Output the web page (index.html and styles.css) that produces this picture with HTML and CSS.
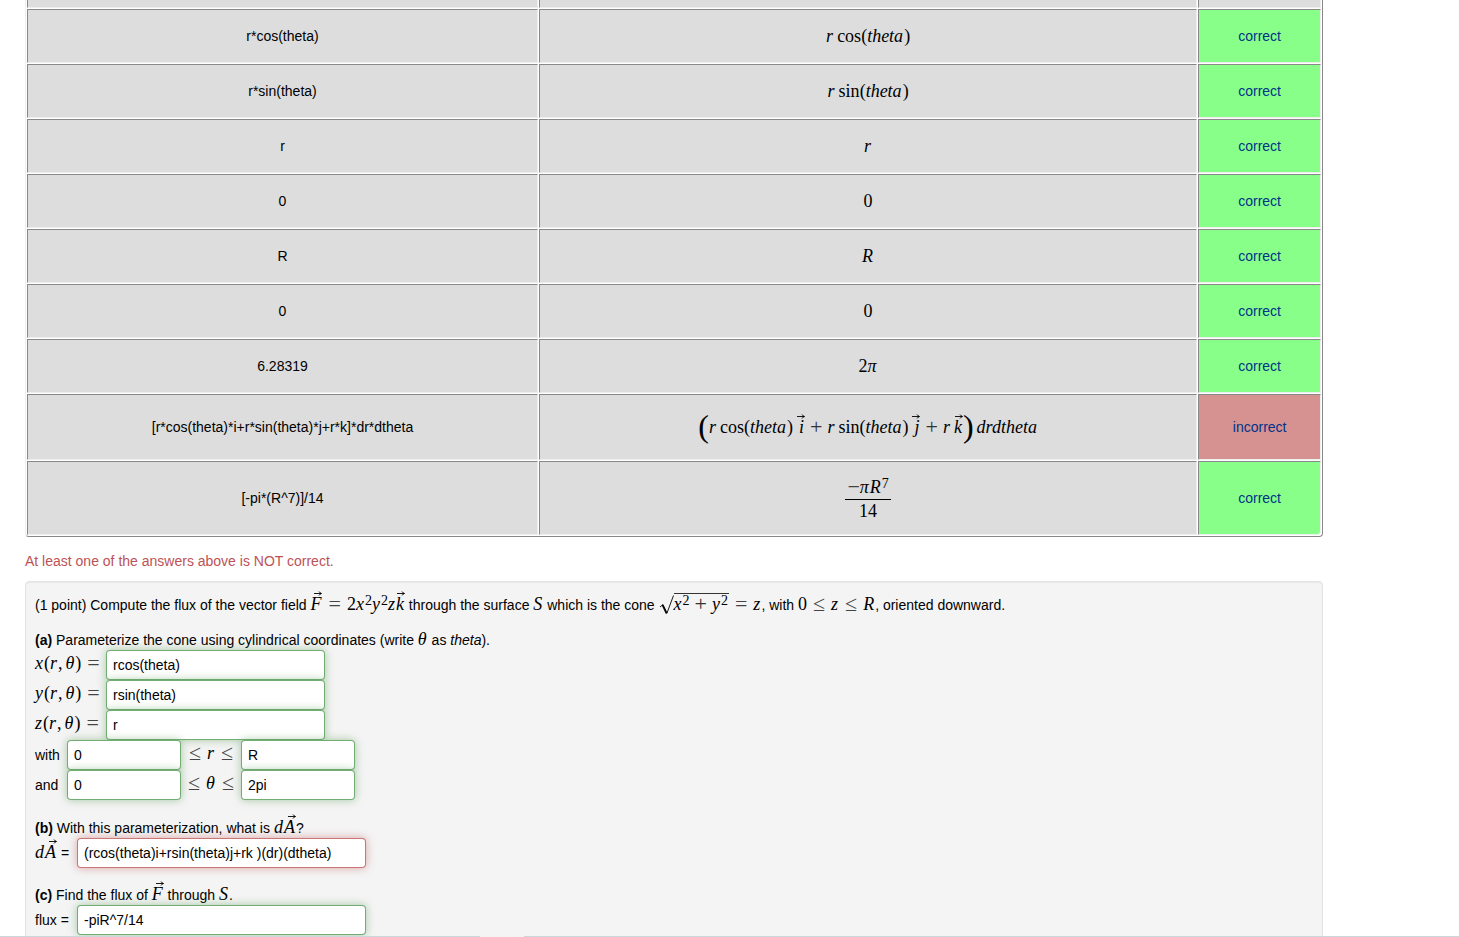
FILE: index.html
```
<!DOCTYPE html>
<html lang="en">
<head>
    <meta charset="UTF-8">
    <meta name="viewport" content="width=device-width, initial-scale=1.0">
    <title>Flux through a cone</title>
    <link rel="stylesheet" href="styles.css">
</head>
<body>
    <!-- vector arrow and radical sign, reused in the formulas -->
    <svg class="defs" width="0" height="0" aria-hidden="true">
        <symbol id="arrow" viewBox="0 0 8 5">
            <path d="M0 2.5H7M5 0.5Q5.6 2 7.6 2.5Q5.6 3 5 4.5" fill="none" stroke="currentColor" stroke-width="0.9"/>
        </symbol>
        <symbol id="radical" viewBox="0 0 15 20">
            <path d="M1 12L4 9.5L8 18L14.5 0.5" fill="none" stroke="currentColor" stroke-width="0.9"/>
            <path d="M3.4 10L7.6 18.6" fill="none" stroke="currentColor" stroke-width="1.6"/>
        </symbol>
    </svg>

    <main class="page">
        <table class="results">
            <colgroup>
                <col class="col-entered">
                <col class="col-preview">
                <col class="col-result">
            </colgroup>
            <tbody>
                <tr><td></td><td></td><td></td></tr>
                <tr>
                    <td>r*cos(theta)</td>
                    <td><span class="math"><i>r</i><span class="fn">cos</span>(<i>theta</i>)</span></td>
                    <td class="correct"><a href="#x">correct</a></td>
                </tr>
                <tr>
                    <td>r*sin(theta)</td>
                    <td><span class="math"><i>r</i><span class="fn">sin</span>(<i>theta</i>)</span></td>
                    <td class="correct"><a href="#y">correct</a></td>
                </tr>
                <tr>
                    <td>r</td>
                    <td><span class="math"><i>r</i></span></td>
                    <td class="correct"><a href="#z">correct</a></td>
                </tr>
                <tr>
                    <td>0</td>
                    <td><span class="math">0</span></td>
                    <td class="correct"><a href="#rmin">correct</a></td>
                </tr>
                <tr>
                    <td>R</td>
                    <td><span class="math"><i>R</i></span></td>
                    <td class="correct"><a href="#rmax">correct</a></td>
                </tr>
                <tr>
                    <td>0</td>
                    <td><span class="math">0</span></td>
                    <td class="correct"><a href="#tmin">correct</a></td>
                </tr>
                <tr>
                    <td>6.28319</td>
                    <td><span class="math">2<i>π</i></span></td>
                    <td class="correct"><a href="#tmax">correct</a></td>
                </tr>
                <tr class="row-vector">
                    <td>[r*cos(theta)*i+r*sin(theta)*j+r*k]*dr*dtheta</td>
                    <td><span class="math"><span class="big">(</span><i>r</i><span class="fn">cos</span>(<i>theta</i>)<span class="vec unit"><i>i</i><svg><use href="#arrow"/></svg></span><span class="op">+</span><i>r</i><span class="fn">sin</span>(<i>theta</i>)<span class="vec unit"><i>j</i><svg><use href="#arrow"/></svg></span><span class="op">+</span><i>r</i><span class="vec thin"><i>k</i><svg><use href="#arrow"/></svg></span><span class="big">)</span><i class="thin">drdtheta</i></span></td>
                    <td class="incorrect"><a href="#da">incorrect</a></td>
                </tr>
                <tr class="row-fraction">
                    <td>[-pi*(R^7)]/14</td>
                    <td><span class="math frac"><span class="num"><span class="minus">−</span><i>π</i><i>R</i><sup>7</sup></span><span class="den">14</span></span></td>
                    <td class="correct"><a href="#flux">correct</a></td>
                </tr>
            </tbody>
        </table>

        <p class="message">At least one of the answers above is NOT correct.</p>

        <form class="problem">
            <p class="intro">(1 point) Compute the flux of the vector field <span class="math"><span class="vec"><i>F</i><svg><use href="#arrow"/></svg></span><span class="rel">=</span>2<i>x</i><sup>2</sup><i>y</i><sup>2</sup><i>z</i><span class="vec"><i>k</i><svg><use href="#arrow"/></svg></span></span> through the surface <span class="math"><i>S</i></span> which is the cone <span class="math"><svg class="radical"><use href="#radical"/></svg><span class="radicand"><i>x</i><sup>2</sup><span class="op">+</span><i>y</i><sup>2</sup></span><span class="rel">=</span><i>z</i></span>, with <span class="math">0<span class="rel">≤</span><i>z</i><span class="rel">≤</span><i>R</i></span>, oriented downward.</p>

            <p class="part part-a"><b>(a)</b> Parameterize the cone using cylindrical coordinates (write <span class="math"><i>θ</i></span> as <em>theta</em>).</p>
            <div class="answer">
                <label for="x" class="coord math"><i>x</i>(<i>r</i>,<i class="thin">θ</i>)<span class="rel">=</span></label>
                <input type="text" id="x" class="medium" value="rcos(theta)">
            </div>
            <div class="answer">
                <label for="y" class="coord math"><i>y</i>(<i>r</i>,<i class="thin">θ</i>)<span class="rel">=</span></label>
                <input type="text" id="y" class="medium" value="rsin(theta)">
            </div>
            <div class="answer">
                <label for="z" class="coord math"><i>z</i>(<i>r</i>,<i class="thin">θ</i>)<span class="rel">=</span></label>
                <input type="text" id="z" class="medium" value="r">
            </div>
            <div class="answer">
                <label for="rmin" class="word">with</label>
                <input type="text" id="rmin" class="short" value="0">
                <label for="rmax" class="between math"><span class="rel">≤</span><i>r</i><span class="rel">≤</span></label>
                <input type="text" id="rmax" class="short" value="R">
            </div>
            <div class="answer">
                <label for="tmin" class="word">and</label>
                <input type="text" id="tmin" class="short" value="0">
                <label for="tmax" class="between math"><span class="rel">≤</span><i>θ</i><span class="rel">≤</span></label>
                <input type="text" id="tmax" class="short" value="2pi">
            </div>

            <p class="part part-b"><b>(b)</b> With this parameterization, what is <span class="math"><i>d</i><span class="vec"><i>A</i><svg><use href="#arrow"/></svg></span></span>?</p>
            <div class="answer">
                <label for="da" class="total"><span class="math"><i>d</i><span class="vec"><i>A</i><svg><use href="#arrow"/></svg></span></span> =</label>
                <input type="text" id="da" class="long wrong" value="(rcos(theta)i+rsin(theta)j+rk )(dr)(dtheta)">
            </div>

            <p class="part"><b>(c)</b> Find the flux of <span class="math"><span class="vec"><i>F</i><svg><use href="#arrow"/></svg></span></span> through <span class="math"><i>S</i></span>.</p>
            <div class="answer">
                <label for="flux" class="total">flux =</label>
                <input type="text" id="flux" class="long" value="-piR^7/14">
            </div>
        </form>
    </main>
    <footer class="edge"></footer>
</body>
</html>
```
FILE: styles.css
```
* {
    box-sizing: border-box;
}
body {
    margin: 0;
    height: 100vh;
    display: flex;
    flex-direction: column;
    overflow: hidden;
    background-color: #fff;
    color: #000;
    font-family: "Liberation Sans", Arial, sans-serif;
    font-size: 14px;
    line-height: 20px;
}
p {
    margin: 0;
}
.defs {
    position: absolute;
}
.page {
    flex: 1;
    min-height: 0;
    overflow: hidden;
    padding: 0 136px 0 25px;
}

/* results table */
.results {
    width: 100%;
    margin-top: -48px;
    table-layout: fixed;
    border: 1px solid;
    border-color: #eee #888 #888 #eee;
    border-radius: 4px;
    border-collapse: separate;
    border-spacing: 1px;
}
.col-entered {
    width: 39.55%;
}
.col-preview {
    width: 50.95%;
}
.results td {
    height: 54px;
    padding: 0 5px;
    border: 1px solid;
    border-color: #888 #eee #eee #888;
    background-color: #ddd;
    text-align: center;
    vertical-align: middle;
}
.results .row-vector td {
    height: 66px;
}
.results .row-fraction td {
    height: 74px;
}
.results .correct {
    background-color: #8f8;
}
.results .incorrect {
    background-color: #d69191;
}
.results tr:last-child td:last-child {
    border-bottom-right-radius: 4px;
}
.results a {
    color: #038;
    text-decoration: none;
}
.results a:hover {
    text-decoration: underline;
}

.message {
    margin: 14px 0 10px;
    color: #bc5256;
}

/* formulas */
.math {
    font-family: "Liberation Serif", "Times New Roman", serif;
    font-size: 18px;
    white-space: nowrap;
}
.math i {
    margin-right: 1px;
}
.math sup {
    font-size: 14px;
    line-height: 0;
    vertical-align: 5px;
}
.fn,
.math .thin {
    margin-left: 3px;
}
.op {
    margin: 0 5px;
    color: #333;
    font-size: 22px;
    line-height: 0;
    vertical-align: -1px;
}
.rel {
    margin: 0 6px;
    color: #444;
    font-size: 22px;
    line-height: 0;
    vertical-align: -1px;
}
.minus {
    color: #444;
    font-size: 22px;
    line-height: 0;
    vertical-align: -1px;
}
.big {
    font-size: 32px;
    line-height: 0;
    vertical-align: -4px;
}
.vec {
    position: relative;
}
.vec svg {
    position: absolute;
    top: -3px;
    right: 0;
    width: 8px;
    height: 5px;
}
.unit {
    margin-left: 6px;
}
.frac {
    display: inline-block;
    padding-top: 2px;
}
.num,
.den {
    display: block;
    padding: 0 2px;
    line-height: 23px;
}
.num {
    border-bottom: 1px solid #000;
}
.radical {
    width: 15px;
    height: 20px;
    vertical-align: -5px;
}
.radicand {
    padding-right: 1px;
    border-top: 1px solid #333;
}

/* problem */
.problem {
    padding: 9px;
    border: 1px solid #e3e3e3;
    border-radius: 4px;
    background-color: #f4f4f4;
    box-shadow: inset 0 1px 1px rgba(0, 0, 0, 0.05);
}
.problem .math {
    line-height: 0;
}
.intro {
    line-height: 28px;
}
.part {
    height: 20px;
    margin-top: 17px;
}
.part-a {
    margin-top: 11px;
}
.part-b {
    margin-top: 18px;
}
.answer {
    display: flex;
    align-items: center;
}
.coord {
    width: 71px;
}
.word {
    width: 32px;
}
.between {
    width: 60px;
    text-align: center;
}
.coord,
.between {
    padding-bottom: 4px;
}
.total {
    width: 42px;
    white-space: nowrap;
}
input {
    height: 30px;
    padding: 4px 6px;
    border: 1px solid rgba(81, 153, 81, 0.8);
    border-radius: 4px;
    background-color: #fff;
    box-shadow: 0 0 8px rgba(81, 153, 81, 0.5);
    color: #000;
    font: inherit;
}
input.wrong {
    border-color: rgba(191, 84, 84, 0.8);
    box-shadow: 0 0 8px rgba(191, 84, 84, 0.5);
}
.short {
    width: 114px;
}
.medium {
    width: 219px;
}
.long {
    width: 289px;
}

.edge {
    height: 1px;
    background: linear-gradient(to right, #ccd5da 480px, #f4f4f4 480px, #f4f4f4 524px, #ccd5da 524px);
}
```
